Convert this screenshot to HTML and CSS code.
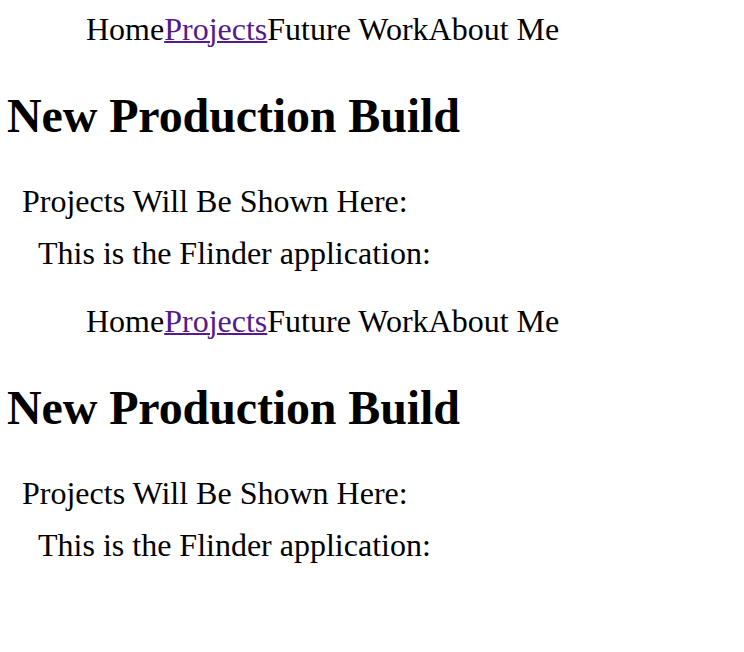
FILE: index.html
```html
<!DOCTYPE html>
<html lang="en">
<head>
<meta charset="utf-8">
<title>New Production Build</title>
<link rel="stylesheet" href="styles.css">
</head>
<body>
<section class="page">
  <nav class="nav">
    <a class="nav-link" href="#">Home</a><a class="nav-link active" href="#">Projects</a><a class="nav-link" href="#">Future Work</a><a class="nav-link" href="#">About Me</a>
  </nav>
  <h1 class="title">New Production Build</h1>
  <p class="lead">Projects Will Be Shown Here:</p>
  <p class="sub">This is the Flinder application:</p>
</section>
<section class="page">
  <nav class="nav">
    <a class="nav-link" href="#">Home</a><a class="nav-link active" href="#">Projects</a><a class="nav-link" href="#">Future Work</a><a class="nav-link" href="#">About Me</a>
  </nav>
  <h1 class="title">New Production Build</h1>
  <p class="lead">Projects Will Be Shown Here:</p>
  <p class="sub">This is the Flinder application:</p>
</section>
</body>
</html>
```
FILE: styles.css
```css
html, body {
  margin: 0;
  padding: 0;
  background: #ffffff;
}
body {
  font-family: "Liberation Serif", "Times New Roman", serif;
  font-size: 32px;
  color: #000000;
}
.page {
  display: flex;
  flex-direction: column;
  align-items: flex-start;
  padding: 11px 0 21px 0;
}
.nav {
  display: flex;
  padding-left: 86px;
  line-height: 36px;
  height: 36px;
}
.nav-link {
  color: #000000;
  text-decoration: none;
}
.nav-link.active {
  color: #551a8b;
  text-decoration: underline;
  text-decoration-thickness: 1.5px;
}
.title {
  margin: 42px 0 0 7px;
  font-size: 48px;
  font-weight: bold;
  line-height: 53px;
  height: 53px;
  letter-spacing: -0.12px;
}
.lead {
  margin: 41px 0 0 22px;
  line-height: 36px;
  height: 36px;
}
.sub {
  margin: 16px 0 0 38px;
  line-height: 36px;
  height: 36px;
}
```
